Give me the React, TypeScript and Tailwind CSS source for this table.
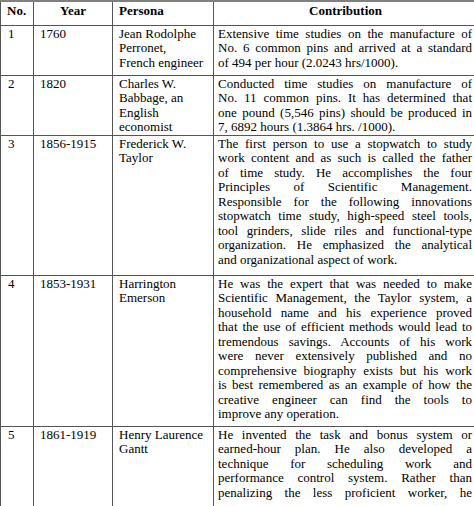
import React from "react";

type Row = {
  no: string;
  year: string;
  persona: string[];
  lines: string[];
  h: string;
  open?: boolean; // paragraph continues past the bottom of the crop
};

const rows: Row[] = [
  {
    no: "1",
    year: "1760",
    persona: ["Jean Rodolphe", "Perronet,", "French engineer"],
    lines: [
      "Extensive time studies on the manufacture of",
      "No. 6 common pins and arrived at a standard",
      "of 494 per hour (2.0243 hrs/1000).",
    ],
    h: "h-[50px]",
  },
  {
    no: "2",
    year: "1820",
    persona: ["Charles W.", "Babbage, an", "English", "economist"],
    lines: [
      "Conducted time studies on manufacture of",
      "No. 11 common pins. It has determined that",
      "one pound (5,546 pins) should be produced in",
      "7, 6892 hours (1.3864 hrs. /1000).",
    ],
    h: "h-[59px]",
  },
  {
    no: "3",
    year: "1856-1915",
    persona: ["Frederick W.", "Taylor"],
    lines: [
      "The first person to use a stopwatch to study",
      "work content and as such is called the father",
      "of time study. He accomplishes the four",
      "Principles of Scientific Management.",
      "Responsible for the following innovations",
      "stopwatch time study, high-speed steel tools,",
      "tool grinders, slide riles and functional-type",
      "organization. He emphasized the analytical",
      "and organizational aspect of work.",
    ],
    h: "h-[140px]",
  },
  {
    no: "4",
    year: "1853-1931",
    persona: ["Harrington", "Emerson"],
    lines: [
      "He was the expert that was needed to make",
      "Scientific Management, the Taylor system, a",
      "household name and his experience proved",
      "that the use of efficient methods would lead to",
      "tremendous savings. Accounts of his work",
      "were never extensively published and no",
      "comprehensive biography exists but his work",
      "is best remembered as an example of how the",
      "creative engineer can find the tools to",
      "improve any operation.",
    ],
    h: "h-[151px]",
  },
  {
    no: "5",
    year: "1861-1919",
    persona: ["Henry Laurence", "Gantt"],
    lines: [
      "He invented the task and bonus system or",
      "earned-hour plan. He also developed a",
      "technique for scheduling work and",
      "performance control system. Rather than",
      "penalizing the less proficient worker, he",
    ],
    h: "h-[90px]",
    open: true,
  },
];

const cell = "border border-[#555] align-top pt-px";

function Justified({ lines, open }: { lines: string[]; open?: boolean }) {
  return (
    <>
      {lines.map((line, i) => (
        <div
          key={i}
          className={
            i < lines.length - 1 || open
              ? "whitespace-nowrap text-justify [text-align-last:justify]"
              : "whitespace-nowrap"
          }
        >
          {line}
        </div>
      ))}
    </>
  );
}

export default function App() {
  return (
    <div className="h-[506px] w-[474px] overflow-hidden bg-white font-['Liberation_Serif','Times_New_Roman',serif] text-[13px] leading-[14.5px] text-black">
      <table className="w-[477px] table-fixed border-collapse border-l border-l-[#d6d6d6]">
        <colgroup>
          <col className="w-[33px]" />
          <col className="w-[79px]" />
          <col className="w-[101px]" />
          <col className="w-[264px]" />
        </colgroup>
        <thead>
          <tr className="h-[24px]">
            <th className="border border-t-2 border-[#555] border-t-[#808080] pl-[6px] pt-[2px] text-left align-top font-bold">
              No.
            </th>
            <th className="border border-t-2 border-[#555] border-t-[#808080] pt-[2px] text-center align-top font-bold">
              Year
            </th>
            <th className="border border-t-2 border-[#555] border-t-[#808080] pl-[6px] pt-[2px] text-left align-top font-bold">
              Persona
            </th>
            <th className="border border-t-2 border-[#555] border-t-[#808080] pt-[2px] text-center align-top font-bold">
              Contribution
            </th>
          </tr>
        </thead>
        <tbody>
          {rows.map((r) => (
            <tr key={r.no} className={r.h}>
              <td className={`${cell} pl-[7px]`}>{r.no}</td>
              <td className={`${cell} pl-[6px]`}>{r.year}</td>
              <td className={`${cell} pl-[6px]`}>
                {r.persona.map((p, i) => (
                  <div key={i} className="whitespace-nowrap">
                    {p}
                  </div>
                ))}
              </td>
              <td className={`${cell} pl-[4px] pr-[5px]`}>
                <Justified lines={r.lines} open={r.open} />
              </td>
            </tr>
          ))}
        </tbody>
      </table>
    </div>
  );
}
